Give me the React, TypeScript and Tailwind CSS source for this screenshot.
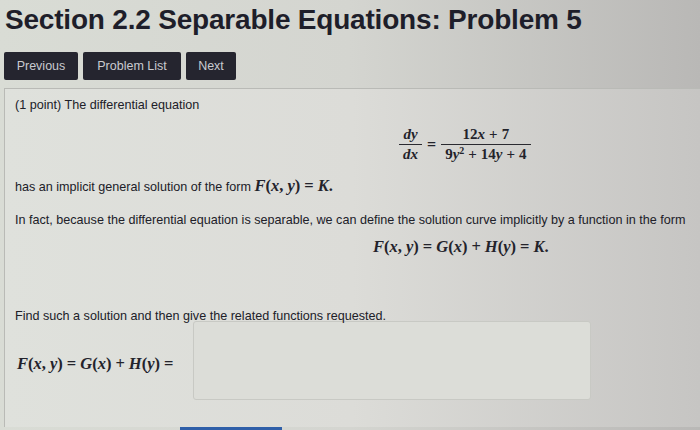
import React from 'react';

const mathFont = "font-['Liberation_Serif','DejaVu_Serif',serif]";

function V({ children }: { children: React.ReactNode }) {
  return <span className="italic">{children}</span>;
}

function Op({ children }: { children: React.ReactNode }) {
  return <span className="mx-[4px]">{children}</span>;
}

function Frac({ num, den, className }: { num: React.ReactNode; den: React.ReactNode; className?: string }) {
  return (
    <span className={`inline-flex flex-col items-center align-middle ${className ?? ''}`}>
      <span className="px-1 leading-[19px]">{num}</span>
      <span className="w-full border-t border-[#2a2a30]" />
      <span className="px-1 leading-[19px]">{den}</span>
    </span>
  );
}

function FormulaFGH({ tail }: { tail?: React.ReactNode }) {
  return (
    <span className={`${mathFont} text-[16.5px] font-semibold text-[#23232b]`}>
      <V>F</V>(<V>x</V>, <V>y</V>)<Op>=</Op><V>G</V>(<V>x</V>)<Op>+</Op><V>H</V>(<V>y</V>)<Op>=</Op>{tail}
    </span>
  );
}

export default function App() {
  return (
    <div className="h-[430px] w-[700px] overflow-hidden bg-gradient-to-r from-[#d9dcd5] via-[#d4d5d0] to-[#b9b8b6] font-['Liberation_Sans',Arial,sans-serif] text-[#202028]">
      <h1 className="px-[5px] pt-[2px] text-[28px] font-bold leading-[36px] tracking-[-0.2px] text-[#1e1e2a]">
        Section 2.2 Separable Equations: Problem 5
      </h1>

      <div className="mt-[14px] flex gap-[5px] px-[4px]">
        <button className="h-[28px] w-[74px] rounded-[2px] bg-[#25252f] text-[12.5px] text-[#c9cacf]">Previous</button>
        <button className="h-[28px] w-[98px] rounded-[2px] bg-[#25252f] text-[12.5px] text-[#c9cacf]">Problem List</button>
        <button className="h-[28px] w-[50px] rounded-[2px] bg-[#25252f] text-[12.5px] text-[#c9cacf]">Next</button>
      </div>

      <div className="mt-[8px] ml-[4px] h-[339px] border-l border-t border-[#b9bab6] bg-gradient-to-r from-[#dfe1dc] via-[#dcdcd8] to-[#c6c5c3] pl-[10px] pt-[8px] text-[12.6px]">
        <p className="leading-[16px]">(1 point) The differential equation</p>

        <div className={`mt-[12px] flex items-center pl-[384px] ${mathFont} text-[15px] font-semibold text-[#23232b]`}>
          <Frac num={<V>dy</V>} den={<V>dx</V>} />
          <span className="mx-[5px] text-[16px]">=</span>
          <Frac
            num={<>12<V>x</V><Op>+</Op>7</>}
            den={<>9<V>y</V><sup className="text-[10px]">2</sup><Op>+</Op>14<V>y</V><Op>+</Op>4</>}
          />
        </div>

        <p className="mt-[13px] flex items-baseline leading-[18px]">
          has an implicit general solution of the form&nbsp;
          <span className={`${mathFont} text-[16.5px] font-semibold text-[#23232b]`}>
            <V>F</V>(<V>x</V>, <V>y</V>)<Op>=</Op><V>K</V>.
          </span>
        </p>

        <p className="mt-[16px] leading-[16px] whitespace-nowrap">
          In fact, because the differential equation is separable, we can define the solution curve implicitly by a function in the form
        </p>
        <div className="mt-[10px] pl-[358px] leading-[18px]">
          <FormulaFGH tail={<><V>K</V>.</>} />
        </div>

        <p className="relative z-10 mt-[52px] leading-[14px] whitespace-nowrap">Find such a solution and then give the related functions requested.</p>
        <div className="-mt-[2px] flex items-start">
          <p className="mt-[34px] w-[178px] shrink-0 pl-[2px] leading-[18px] whitespace-nowrap">
            <FormulaFGH />
          </p>
          <div className="h-[79px] w-[398px] rounded-[3px] border border-[#c8c9c4] bg-[#dcddd8]" />
        </div>
      </div>
      <div className="ml-[180px] h-[3px] w-[102px] bg-[#2f5fa8]" />
    </div>
  );
}
